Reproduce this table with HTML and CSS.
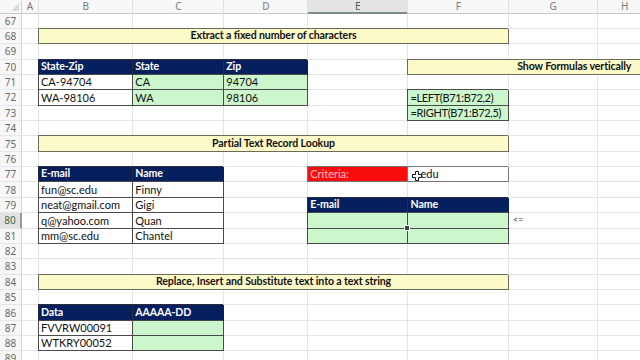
FILE: index.html
```html
<!DOCTYPE html>
<html>
<head>
<meta charset="utf-8">
<link rel="stylesheet" href="styles.css">
</head>
<body>
<div class="sheet">
  <div class="corner"><span class="tri"></span></div><div class="ch">A</div><div class="ch">B</div><div class="ch">C</div><div class="ch">D</div><div class="ch sel">E</div><div class="ch">F</div><div class="ch">G</div><div class="ch">H</div>

  <div class="rh">67</div><div></div><div></div><div></div><div></div><div></div><div></div><div></div><div></div>

  <div class="rh">68</div><div></div><div class="bar span5">Extract a fixed number of characters</div><div></div><div></div>

  <div class="rh">69</div><div></div><div></div><div></div><div></div><div></div><div></div><div></div><div></div>

  <div class="rh">70</div><div></div><div class="th">State-Zip</div><div class="th">State</div><div class="th">Zip</div><div></div><div class="bar span3 right">Show Formulas vertically</div>

  <div class="rh">71</div><div></div><div class="t">CA-94704</div><div class="t g">CA</div><div class="t g">94704</div><div></div><div></div><div></div><div></div>

  <div class="rh">72</div><div></div><div class="t">WA-98106</div><div class="t g">WA</div><div class="t g">98106</div><div></div><div class="t g f">=LEFT(B71:B72,2)</div><div></div><div></div>

  <div class="rh">73</div><div></div><div></div><div></div><div></div><div></div><div class="t g f">=RIGHT(B71:B72,5)</div><div></div><div></div>

  <div class="rh">74</div><div></div><div></div><div></div><div></div><div></div><div></div><div></div><div></div>

  <div class="rh">75</div><div></div><div class="bar span5">Partial Text Record Lookup</div><div></div><div></div>

  <div class="rh">76</div><div></div><div></div><div></div><div></div><div></div><div></div><div></div><div></div>

  <div class="rh">77</div><div></div><div class="th">E-mail</div><div class="th">Name</div><div></div><div class="t red">Criteria:</div><div class="t crit"><span class="cur"><svg width="10" height="10" viewBox="0 0 10 10"><path d="M3.5 0.5h3v3h3v3h-3v3h-3v-3h-3v-3h3z" fill="#fff" stroke="#111" stroke-width="1"/></svg></span>edu</div><div></div><div></div>

  <div class="rh">78</div><div></div><div class="t">fun@sc.edu</div><div class="t">Finny</div><div></div><div></div><div></div><div></div><div></div>

  <div class="rh">79</div><div></div><div class="t">neat@gmail.com</div><div class="t">Gigi</div><div></div><div class="th">E-mail</div><div class="th">Name</div><div></div><div></div>

  <div class="rh sel">80</div><div></div><div class="t">q@yahoo.com</div><div class="t">Quan</div><div></div><div class="t g active"><span class="handle"></span></div><div class="t g"></div><div class="small">&lt;=</div><div></div>

  <div class="rh">81</div><div></div><div class="t">mm@sc.edu</div><div class="t">Chantel</div><div></div><div class="t g"></div><div class="t g"></div><div></div><div></div>

  <div class="rh">82</div><div></div><div></div><div></div><div></div><div></div><div></div><div></div><div></div>

  <div class="rh">83</div><div></div><div></div><div></div><div></div><div></div><div></div><div></div><div></div>

  <div class="rh">84</div><div></div><div class="bar span5">Replace, Insert and Substitute text into a text string</div><div></div><div></div>

  <div class="rh">85</div><div></div><div></div><div></div><div></div><div></div><div></div><div></div><div></div>

  <div class="rh">86</div><div></div><div class="th">Data</div><div class="th">AAAAA-DD</div><div></div><div></div><div></div><div></div><div></div>

  <div class="rh">87</div><div></div><div class="t">FVVRW00091</div><div class="t g"></div><div></div><div></div><div></div><div></div><div></div>

  <div class="rh">88</div><div></div><div class="t">WTKRY00052</div><div class="t g"></div><div></div><div></div><div></div><div></div><div></div>

  <div class="rh last">89</div><div></div><div></div><div></div><div></div><div></div><div></div><div></div><div></div>
</div>
</body>
</html>
```

FILE: styles.css
```css
html, body {
  margin: 0;
  padding: 0;
  background: #ffffff;
  overflow: hidden;
}

body {
  font-family: Lato, "Noto Sans", sans-serif;
  width: 640px;
  height: 360px;
}

.sheet {
  display: grid;
  grid-template-columns: 22px 17px 94.3px 91px 84px 100.2px 100.5px 89.3px 54px;
  grid-template-rows: 13.5px repeat(23, 15.36px);
  width: 652px;
}

.sheet > div {
  box-sizing: border-box;
  border-right: 1px solid #e4e4e4;
  border-bottom: 1px solid #e4e4e4;
  display: flex;
  align-items: flex-end;
  padding: 0 2px 1px;
  font-size: 11px;
  letter-spacing: 0;
  line-height: 13px;
  white-space: nowrap;
  overflow: hidden;
  color: #111;
  min-width: 0;
}

.sheet > .corner {
  background: #f7f7f7;
  border-right: 1px solid #d4d4d4;
  border-bottom: 1px solid #c8c8c8;
  position: relative;
}

.tri {
  position: absolute;
  right: 2px;
  bottom: 2px;
  width: 0;
  height: 0;
  border-left: 8px solid transparent;
  border-bottom: 8px solid #dadada;
}

.sheet > .ch {
  background: #f7f7f7;
  border-right: 1px solid #e0e0e0;
  border-bottom: 1px solid #c8c8c8;
  justify-content: center;
  align-items: center;
  color: #7a7a7a;
  font-family: "Noto Sans", sans-serif;
  font-size: 10px;
  line-height: 11px;
  padding: 0;
}

.sheet > .ch.sel {
  background: #e4e4e4;
  box-shadow: inset 0 -1px 0 #7c8f80;
  border-bottom-color: #7c8f80;
  color: #555;
}

.sheet > .rh {
  background: #f7f7f7;
  border-right: 1px solid #d4d4d4;
  border-bottom: 1px solid #e6e6e6;
  justify-content: center;
  align-items: center;
  color: #6a6a6a;
  font-family: "Noto Sans", sans-serif;
  font-size: 10px;
  line-height: 12px;
  padding: 0;
}

.sheet > .rh.last {
  align-items: flex-start;
  padding-top: 1px;
}

.sheet > .rh.sel {
  background: #e2e2e2;
  color: #3d6b4d;
  border-right: 2px solid #8aa090;
}

.sheet > .t {
  border-right: 1px solid #4a4a4a;
  border-bottom: 1px solid #4a4a4a;
  box-shadow: -1px -1px 0 #4a4a4a, -1px 0 0 #4a4a4a;
}

.sheet > .g {
  background: #ccf6cc;
}

.sheet > .f {
  letter-spacing: -0.35px;
}

.sheet > .th {
  background: #06205f;
  color: #ffffff;
  font-weight: 700;
  font-size: 10.6px;
  letter-spacing: -0.12px;
  border-right: 1px solid #06205f;
  border-bottom: 1px solid #06205f;
  box-shadow: -1px -1px 0 #2a2a3a, -1px 0 0 #2a2a3a;
}

.sheet > .bar {
  background: #fdfac9;
  border-right: 1px solid #6b6b5a;
  border-bottom: 1px solid #6b6b5a;
  box-shadow: -1px -1px 0 #6b6b5a, -1px 0 0 #6b6b5a;
  font-weight: 700;
  font-size: 10.6px;
  letter-spacing: -0.12px;
  justify-content: center;
}

.sheet > .span5 {
  grid-column: span 5;
}

.sheet > .span3 {
  grid-column: span 3;
}

.sheet > .bar.right {
  justify-content: flex-end;
  padding-right: 21px;
  border-right: none;
}

.sheet > .red {
  background: #f80d0d;
  color: #ffc4c4;
  border-right: 1px solid #777;
  border-bottom: 1px solid #777;
  box-shadow: -1px -1px 0 #777, -1px 0 0 #777;
}

.sheet > .crit {
  position: relative;
  padding-left: 12px;
  border-right: 1px solid #777;
  border-bottom: 1px solid #777;
  box-shadow: -1px -1px 0 #777, -1px 0 0 #777;
}

.cur {
  position: absolute;
  left: 4px;
  top: 4px;
  line-height: 0;
}

.sheet > .active {
  position: relative;
  overflow: visible;
}

.handle {
  position: absolute;
  right: -3px;
  bottom: -3px;
  width: 4px;
  height: 4px;
  background: #2f4f3a;
  border: 1px solid #fff;
}

.sheet > .small {
  font-size: 9px;
  color: #333;
  padding-left: 4px;
  padding-bottom: 2px;
}
```
